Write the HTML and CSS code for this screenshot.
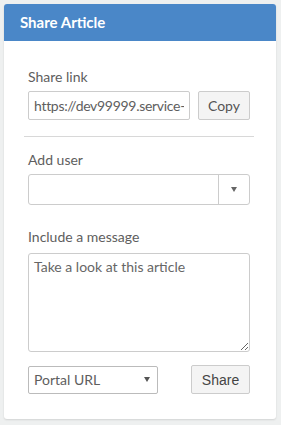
FILE: index.html
```html
<!DOCTYPE html>
<html>
<head>
<meta charset="utf-8">
<link rel="stylesheet" href="styles.css">
</head>
<body>
<div class="card">
  <div class="card-header">Share Article</div>
  <div class="card-body">
    <div class="group">
      <label class="label">Share link</label>
      <div class="link-row">
        <input class="input link-input" type="text" value="https://dev99999.service-now.com/kb_view.do" readonly>
        <button class="btn btn-copy">Copy</button>
      </div>
    </div>
    <hr class="divider">
    <div class="group">
      <label class="label">Add user</label>
      <div class="combo">
        <div class="combo-field"></div>
        <div class="combo-arrow"><span class="tri"></span></div>
      </div>
    </div>
    <div class="group group-msg">
      <label class="label">Include a message</label>
      <textarea class="textarea">Take a look at this article</textarea>
    </div>
    <div class="footer-row">
      <div class="select">
        <span>Portal URL</span>
        <span class="tri tri-dark"></span>
      </div>
      <button class="btn btn-share">Share</button>
    </div>
  </div>
</div>
</body>
</html>
```
FILE: styles.css
```css
html, body {
  margin: 0;
  padding: 0;
}
body {
  background: #eef0f0;
  font-family: Lato, "Open Sans", sans-serif;
  color: #5e5e5e;
  width: 281px;
  height: 425px;
  overflow: hidden;
}
.card {
  margin: 4px 0 0 4px;
  width: 272px;
  height: 415px;
  background: #fff;
  border-radius: 3px;
  box-shadow: 0 1px 2px rgba(0,0,0,0.12);
  box-sizing: border-box;
  overflow: hidden;
}
.card-header {
  background: #4a87c8;
  color: #fff;
  font-weight: bold;
  font-size: 15px;
  height: 37px;
  line-height: 36px;
  padding-left: 16px;
  box-sizing: border-box;
}
.card-body {
  padding: 26px 22px 0 20px;
}
.group {
  padding: 0 4px;
}
.label {
  display: block;
  font-size: 14px;
  line-height: 20px;
  margin-bottom: 4px;
  color: #5e5e5e;
}
.link-row {
  display: flex;
  justify-content: space-between;
}
.input {
  box-sizing: border-box;
  border: 1px solid #ccc;
  border-radius: 2px;
  height: 29px;
  font-family: Lato, "Open Sans", sans-serif;
  font-size: 14px;
  letter-spacing: -0.3px;
  color: #5e5e5e;
  padding: 0 5px;
  outline: none;
}
.link-input {
  width: 162px;
}
.btn {
  box-sizing: border-box;
  border: 1px solid #ccc;
  border-radius: 2px;
  background: #f4f4f4;
  color: #444;
  height: 29px;
  padding: 0;
}
.btn-copy {
  width: 52px;
  font-family: Lato, "Open Sans", sans-serif;
  font-size: 14px;
  color: #555;
}
.divider {
  border: 0;
  border-top: 1px solid #d8d8d8;
  margin: 16px 0 13px;
}
.combo {
  display: flex;
  height: 31px;
  border: 1px solid #ccc;
  border-radius: 3px;
  box-sizing: border-box;
}
.combo-field {
  flex: 1;
}
.combo-arrow {
  width: 30px;
  border-left: 1px solid #ccc;
  display: flex;
  align-items: center;
  justify-content: center;
}
.tri {
  display: block;
  width: 0;
  height: 0;
  border-left: 3.5px solid transparent;
  border-right: 3.5px solid transparent;
  border-top: 5px solid #666;
}
.group-msg {
  margin-top: 22px;
}
.group-msg .label {
  margin-bottom: 6px;
}
.textarea {
  display: block;
  box-sizing: border-box;
  width: 222px;
  height: 99px;
  border: 1px solid #ccc;
  border-radius: 3px;
  font-family: Lato, "Open Sans", sans-serif;
  font-size: 14px;
  line-height: 18px;
  color: #666;
  padding: 4px 5px;
  resize: both;
  outline: none;
}
.footer-row {
  display: flex;
  justify-content: space-between;
  align-items: center;
  padding: 0 4px;
  margin-top: 13px;
}
.select {
  box-sizing: border-box;
  width: 130px;
  height: 28px;
  border: 1px solid #bbb;
  border-radius: 2px;
  display: flex;
  align-items: center;
  justify-content: space-between;
  padding: 0 6px 0 5px;
  font-size: 14px;
  color: #5e5e5e;
}
.tri-dark {
  border-top-color: #555;
  margin-right: 1px;
}
.btn-share {
  width: 59px;
  font-family: "Liberation Sans", Arial, sans-serif;
  font-size: 14px;
}
```
